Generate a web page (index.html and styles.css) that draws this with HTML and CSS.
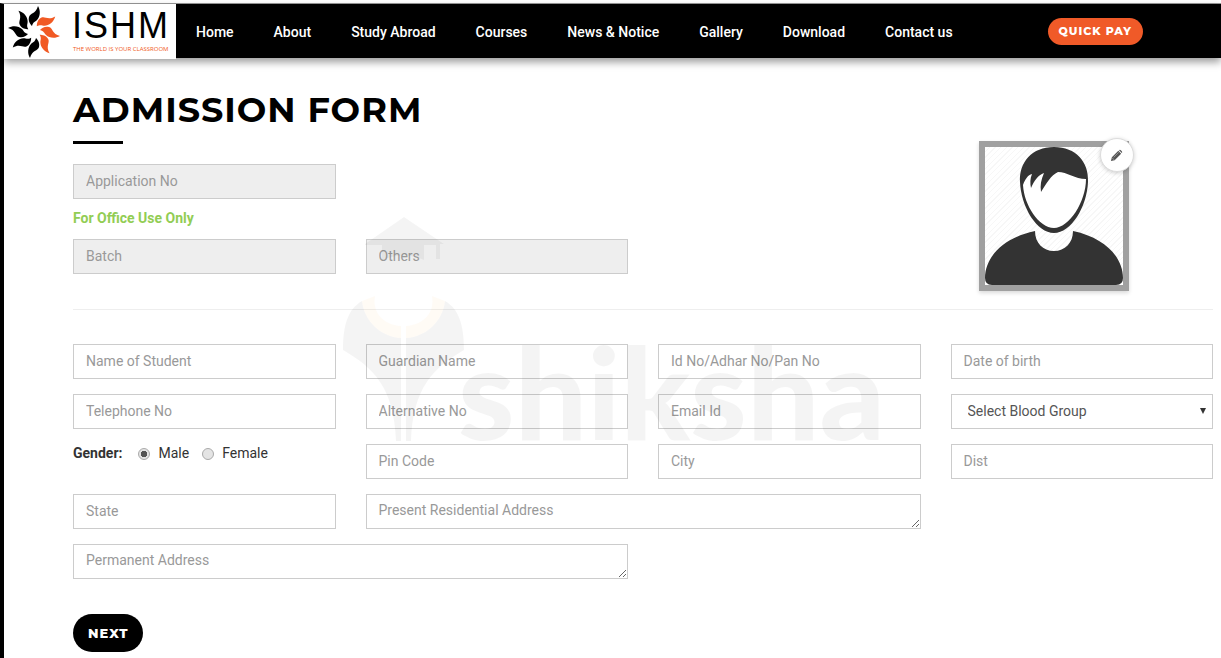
FILE: index.html
```html
<!DOCTYPE html>
<html lang="en">
<head>
    <meta charset="UTF-8">
    <meta name="viewport" content="width=device-width, initial-scale=1.0">
    <title>Admission Form</title>
    <link rel="stylesheet" href="styles.css">
</head>
<body>
    <div class="page">
        <header class="header">
            <a class="logo" href="#" aria-label="ISHM">
                <svg class="logo-mark" viewBox="-28 -26 56 52" aria-hidden="true">
                    <defs>
                        <path id="petal" d="M-2 -6 C-4 -8 -6 -11 -5 -15 C-4 -19 2 -18 4 -26 C7 -21 6 -15 3 -12 C1 -10 -1 -10 -2 -6 Z"/>
                    </defs>
                    <g fill="#000">
                        <use href="#petal"/>
                        <use href="#petal" transform="rotate(180)"/>
                        <use href="#petal" transform="rotate(225)"/>
                        <use href="#petal" transform="rotate(270)"/>
                        <use href="#petal" transform="rotate(315)"/>
                    </g>
                    <g fill="#f15a24">
                        <use href="#petal" transform="rotate(45)"/>
                        <use href="#petal" transform="rotate(90)"/>
                        <use href="#petal" transform="rotate(135)"/>
                    </g>
                </svg>
                <span class="logo-text">
                    <span class="logo-name">ISHM</span>
                    <span class="logo-tagline">THE WORLD IS YOUR CLASSROOM</span>
                </span>
            </a>
            <nav class="nav">
                <a href="#">Home</a>
                <a href="#">About</a>
                <a href="#">Study Abroad</a>
                <a href="#">Courses</a>
                <a href="#">News &amp; Notice</a>
                <a href="#">Gallery</a>
                <a href="#">Download</a>
                <a href="#">Contact us</a>
            </nav>
            <a class="quick-pay" href="#">QUICK PAY</a>
        </header>

        <main class="content">
            <form id="admissionForm">
                <!-- Office section and photo -->
                <div class="intro">
                    <div class="office">
                        <h1 class="title">ADMISSION FORM</h1>
                        <input class="field" type="text" name="application_no" placeholder="Application No" aria-label="Application No" disabled>
                        <p class="office-note">For Office Use Only</p>
                        <input class="field" type="text" name="batch" placeholder="Batch" aria-label="Batch" disabled>
                        <input class="field" type="text" name="others" placeholder="Others" aria-label="Others" disabled>
                    </div>
                    <div class="photo">
                        <svg class="avatar" viewBox="0 0 138 138" aria-hidden="true">
                            <path fill="#333" d="M69 0 C91 0 104 15 103 35 C102 60 86 86 69 86 C52 86 36 60 35 35 C34 15 47 0 69 0 Z"/>
                            <path fill="#fff" d="M38 38 C40 32 43 28 47 27 C45 32 45 36 46 41 C49 34 53 28 59 26 C56 33 55 38 56 45 C61 37 66 28 73 25 C82 25 90 32 101 32 C101 55 84 81 69 81 C54 81 39 58 38 38 Z"/>
                            <path fill="#333" d="M50 84 C50 96 58 104 69 104 C80 104 88 96 88 84 C121 91 138 111 138 131 Q138 138 131 138 H7 Q0 138 0 131 C0 111 17 91 50 84 Z"/>
                        </svg>
                        <button class="edit-photo" type="button" aria-label="Edit photo">
                            <svg viewBox="0 0 14 14" aria-hidden="true">
                                <path fill="#555" d="M1 13 L2 9 L9 2 L12 5 L5 12 Z M9.700 1.300 Q10.700 .3 11.700 1.300 L12.700 2.300 Q13.700 3.300 12.700 4.300 Z"/>
                                <path stroke="#fff" stroke-width=".4" fill="none" d="M2.300 9.500 L4.500 11.700 M4 9 L9.500 3.500"/>
                            </svg>
                        </button>
                    </div>
                </div>

                <!-- Student details -->
                <div class="details">
                    <input class="field" type="text" name="student_name" placeholder="Name of Student" aria-label="Name of Student">
                    <input class="field" type="text" name="guardian_name" placeholder="Guardian Name" aria-label="Guardian Name">
                    <input class="field" type="text" name="id_no" placeholder="Id No/Adhar No/Pan No" aria-label="Id No/Adhar No/Pan No">
                    <input class="field" type="text" name="dob" placeholder="Date of birth" aria-label="Date of birth">

                    <input class="field" type="tel" name="telephone" placeholder="Telephone No" aria-label="Telephone No">
                    <input class="field" type="tel" name="alternative" placeholder="Alternative No" aria-label="Alternative No">
                    <input class="field" type="email" name="email" placeholder="Email Id" aria-label="Email Id">
                    <div class="select-wrap">
                        <select class="field" name="blood_group" aria-label="Select Blood Group">
                            <option value="">Select Blood Group</option>
                            <option>A+</option>
                            <option>A-</option>
                            <option>B+</option>
                            <option>B-</option>
                            <option>AB+</option>
                            <option>AB-</option>
                            <option>O+</option>
                            <option>O-</option>
                        </select>
                    </div>

                    <div class="gender" role="radiogroup" aria-labelledby="genderLabel">
                        <strong id="genderLabel">Gender:</strong>
                        <label><input type="radio" name="gender" value="Male" checked>Male</label>
                        <label><input type="radio" name="gender" value="Female">Female</label>
                    </div>
                    <input class="field" type="text" name="pin_code" placeholder="Pin Code" aria-label="Pin Code">
                    <input class="field" type="text" name="city" placeholder="City" aria-label="City">
                    <input class="field" type="text" name="dist" placeholder="Dist" aria-label="Dist">

                    <input class="field" type="text" name="state" placeholder="State" aria-label="State">
                    <textarea class="field wide" name="present_address" placeholder="Present Residential Address" aria-label="Present Residential Address"></textarea>

                    <textarea class="field wide new-row" name="permanent_address" placeholder="Permanent Address" aria-label="Permanent Address"></textarea>
                </div>

                <button class="next" type="submit">NEXT</button>
            </form>
        </main>

        <!-- Watermark over the form -->
        <div class="watermark">
            <svg viewBox="0 0 122 226" aria-hidden="true">
                <g fill="#000" fill-opacity=".045">
                    <path d="M61 0 L101 27 H97 V42 H93 V28 H81 V43 Q61 34 39 43 V28 H22 V27 Z"/>
                    <path d="M19 84 C21 104 38 120 58 121 V224 H53 C51 171 31 151 0 133 C0 108 5 92 19 84 Z"/>
                    <path d="M102 84 C100 104 83 120 63 121 V224 H68 C70 171 90 151 121 133 C121 108 116 92 102 84 Z"/>
                </g>
                <path fill="#f90" fill-opacity=".04" d="M19 84 L32 79 C29 96 41 108 58 109 V121 C38 120 21 104 19 84 Z M102 84 L89 79 C92 96 80 108 63 109 V121 C83 120 100 104 102 84 Z"/>
            </svg>
            <span>shiksha</span>
        </div>
    </div>
</body>
</html>
```
FILE: styles.css
```css
* {
    box-sizing: border-box;
}
body {
    font-family: Roboto, "Liberation Sans", sans-serif;
    font-size: 14px;
    line-height: 20px;
    color: #333;
    background: #fff;
    margin: 0;
    padding-top: 3px;
}
a {
    text-decoration: none;
}
.page {
    position: relative;
    min-height: calc(100vh - 3px);
    border-top: 1px solid #999;
    border-left: 4px solid #000;
}

/* Header */
.header {
    display: flex;
    align-items: center;
    height: 54px;
    padding-right: 78px;
    background: #000;
    box-shadow: 0 4px 8px rgba(0, 0, 0, 0.4);
}
.logo {
    display: flex;
    align-items: center;
    gap: 10px;
    width: 172px;
    height: 55px;
    align-self: flex-start;
    padding-left: 2px;
    background: #fff;
}
.logo-mark {
    width: 56px;
    height: 52px;
}
.logo-text {
    display: flex;
    flex-direction: column;
    padding-bottom: 2px;
    white-space: nowrap;
}
.logo-name {
    font-family: "Liberation Sans", Arial, sans-serif;
    font-size: 36px;
    line-height: 36px;
    letter-spacing: 2px;
    color: #000;
}
.logo-tagline {
    padding-left: 1px;
    font-family: "Open Sans", sans-serif;
    font-size: 6px;
    line-height: 10px;
    color: #f15a24;
}
.nav {
    display: flex;
}
.nav a {
    padding: 19px 20px 17px;
    font-weight: 500;
    color: #fff;
}
.quick-pay {
    margin-left: auto;
    padding: 0 11px;
    border-radius: 14px;
    background: #f05a28;
    color: #fff;
    font-family: Montserrat, Inter, sans-serif;
    font-size: 11px;
    font-weight: 800;
    line-height: 27px;
    letter-spacing: 1px;
}

/* Form */
.content {
    padding: 32px 8px 0 69px;
}
.intro,
.details {
    display: grid;
    grid-template-columns: repeat(4, 1fr);
    gap: 15px 30px;
}
.intro {
    padding-bottom: 35px;
    border-bottom: 1px solid #eee;
}
.office {
    grid-column: span 3;
    display: grid;
    grid-template-columns: repeat(3, 1fr);
    column-gap: 30px;
    align-content: start;
}
.title {
    grid-column: 1 / -1;
    margin: 0 0 20px;
    font-family: Montserrat, Inter, sans-serif;
    font-size: 35px;
    font-weight: 700;
    line-height: 40px;
    letter-spacing: 1px;
    color: #000;
}
.title::after {
    content: "";
    display: block;
    width: 50px;
    height: 3px;
    margin-top: 11px;
    background: #000;
}
.office-note {
    grid-column: 1 / -1;
    margin: 9px 0 11px;
    font-weight: 700;
    color: #92cd54;
}
.office .field:first-of-type {
    grid-column: 1;
}
.field {
    display: block;
    width: 100%;
    height: 35px;
    margin: 0;
    padding: 5px 12px 7px;
    border: 1px solid #ccc;
    border-radius: 0;
    background: #fff;
    color: #555;
    font: inherit;
}
.field::placeholder {
    color: #999;
    opacity: 1;
}
.field:disabled {
    background: #eee;
}
.wide {
    grid-column: span 2;
}
.new-row {
    grid-column: 1 / span 2;
}
.select-wrap {
    position: relative;
}
.select-wrap select {
    appearance: none;
    padding: 5px 16px 7px;
    color: #555;
}
.select-wrap::after {
    content: "";
    position: absolute;
    top: 14px;
    right: 7px;
    border: 3px solid transparent;
    border-top: 6px solid #333;
    border-bottom: 0;
    pointer-events: none;
}

/* Photo */
.photo {
    position: relative;
    width: 150px;
    height: 150px;
    margin: 51px 0 -18px 28px;
    border: 6px solid #a0a0a0;
    background: repeating-linear-gradient(135deg, #fff 0 3px, #f7f7f7 3px 4px);
    box-shadow: 0 2px 4px rgba(0, 0, 0, 0.15);
}
.avatar {
    display: block;
    width: 100%;
}
.edit-photo {
    position: absolute;
    top: -9px;
    right: -11px;
    display: flex;
    align-items: center;
    justify-content: center;
    width: 34px;
    height: 34px;
    padding: 0;
    border: 1px solid #ddd;
    border-radius: 50%;
    background: #fff;
    box-shadow: 0 1px 4px rgba(0, 0, 0, 0.2);
}
.edit-photo svg {
    width: 13px;
    height: 13px;
}

/* Details */
.details {
    padding: 34px 0 35px;
}
.gender {
    display: flex;
    align-items: flex-start;
    gap: 13px;
    line-height: 18px;
}
.gender strong {
    margin-right: 3px;
    font-weight: 700;
}
.gender label {
    display: flex;
    align-items: center;
    gap: 8px;
}
.gender input {
    appearance: none;
    width: 12px;
    height: 12px;
    margin: 2px 0 0;
    border: 1px solid #aaa;
    border-radius: 50%;
    background: #e4e4e4;
}
.gender input:checked {
    background: radial-gradient(circle, #555 0 3px, #e4e4e4 3px);
}
.next {
    padding: 0 14px 0 15px;
    border: none;
    border-radius: 19px;
    background: #000;
    color: #fff;
    font-family: Montserrat, Inter, sans-serif;
    font-size: 13px;
    font-weight: 800;
    line-height: 38px;
    letter-spacing: 1px;
    cursor: pointer;
}

/* Watermark */
.watermark {
    position: absolute;
    top: 213px;
    left: 339px;
    display: flex;
    align-items: flex-end;
    pointer-events: none;
}
.watermark svg {
    width: 122px;
    height: 226px;
}
.watermark span {
    margin-left: -7px;
    padding-bottom: 7px;
    font-family: Lato, sans-serif;
    font-size: 128px;
    font-weight: 900;
    line-height: 90px;
    color: rgba(0, 0, 0, 0.045);
}
```
